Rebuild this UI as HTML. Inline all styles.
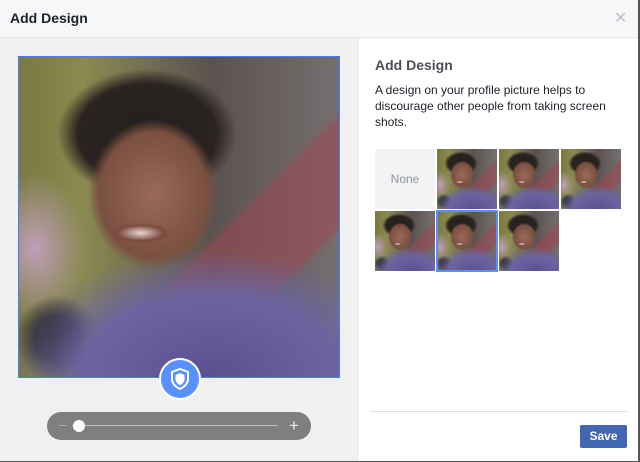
<!DOCTYPE html>
<html><head><style>
body{margin:0;width:640px;height:462px;overflow:hidden;font-family:"Liberation Sans",sans-serif;background:#fff;position:relative}
.hdr{position:absolute;left:0;top:0;width:638px;height:37px;background:#f6f7f9;border-bottom:1px solid #e5e5e5}
.hdr b{position:absolute;left:10px;top:10px;font-size:14px;color:#1d2129}
.x{position:absolute;left:614px;top:8px;font-size:16px;color:#bec3c9}
.left{position:absolute;left:0;top:38px;width:359px;height:423px;background:#f0f0f0}
.photo{background:
radial-gradient(ellipse 12% 4% at 38% 55%,#e8d8d0 0,#7a4a40 60%,transparent 80%),
radial-gradient(ellipse 26% 30% at 42% 43%,#9a6a58 0,#7a5040 65%,transparent 78%),
radial-gradient(ellipse 36% 26% at 40% 24%,#24201e 0,#2a2320 60%,transparent 78%),
radial-gradient(ellipse 80% 50% at 60% 100%,#5a5090 0,#6c64a0 50%,transparent 80%),
radial-gradient(ellipse 18% 18% at 12% 88%,#222 0,#333 40%,transparent 75%),
radial-gradient(ellipse 20% 30% at 5% 60%,#c0a0b8 0,transparent 80%),
linear-gradient(135deg,transparent 58%,rgba(160,70,80,.55) 60%,rgba(160,70,80,.55) 76%,transparent 78%),
linear-gradient(90deg,#7a7a40 0,#8a8a50 20%,#5a5250 60%,#756f6f 100%);}
.big{position:absolute;left:18px;top:56px;width:320px;height:320px;border:1px solid #4080ff}
.shield{position:absolute;left:159px;top:358px;width:38px;height:38px;border-radius:50%;background:#5890ff;border:2px solid #fff}
.slider{position:absolute;left:47px;top:412px;width:264px;height:28px;border-radius:14px;background:#7f7f7f}
.right{position:absolute;left:359px;top:38px;width:279px;height:423px;background:#fff}
h3{position:absolute;left:375px;top:57px;margin:0;font-size:14px;color:#4b4f56}
.desc{position:absolute;left:375px;top:82px;width:250px;font-size:12px;line-height:16px;color:#1d2129}
.t{position:absolute;width:60px;height:60px}
.sel{outline:2px solid #5890ff;outline-offset:-1px}
.none{background:#f2f3f5;color:#90949c;font-size:12px;text-align:center;line-height:60px}
.div{position:absolute;left:370px;top:411px;width:257px;height:1px;background:#dddfe2}
.save{position:absolute;left:580px;top:425px;width:47px;height:23px;background:#4267b2;color:#fff;font-weight:bold;font-size:12px;text-align:center;line-height:23px;border-radius:2px}
.edge{position:absolute;right:0;top:0;width:2px;height:462px;background:#555}
.edgeb{position:absolute;left:0;bottom:0;width:640px;height:1px;background:#555}
</style></head><body>
<div class="hdr"><b>Add Design</b><span class="x">✕</span></div>
<div class="left"></div>
<div class="big photo"></div>
<div class="shield"><svg width="38" height="38" viewBox="0 0 38 38"><path d="M19 9 L27 12 V19 C27 24 23 27 19 29 C15 27 11 24 11 19 V12 Z" fill="none" stroke="#fff" stroke-width="2"/><path d="M19 13 L23.5 15 V19.5 C23.5 22 21.5 24 19 25.2 C16.5 24 14.5 22 14.5 19.5 V15 Z" fill="#fff"/></svg></div>
<div class="slider"><div style="position:absolute;left:12px;top:13px;width:8px;height:1px;background:#aaa"></div><div style="position:absolute;left:25px;top:13px;width:206px;height:1px;background:#bbb"></div><div style="position:absolute;left:26px;top:8px;width:12px;height:12px;border-radius:50%;background:#fff"></div><div style="position:absolute;left:242px;top:4px;color:#eee;font-size:17px">+</div></div>
<div class="right"></div>
<h3>Add Design</h3>
<div class="desc">A design on your profile picture helps to discourage other people from taking screen shots.</div>
<div class="t none" style="left:375px;top:149px">None</div>
<div class="t photo" style="left:437px;top:149px"></div>
<div class="t photo" style="left:499px;top:149px"></div>
<div class="t photo" style="left:561px;top:149px"></div>
<div class="t photo" style="left:375px;top:211px"></div>
<div class="t photo sel" style="left:437px;top:211px"></div>
<div class="t photo" style="left:499px;top:211px"></div>
<div class="div"></div>
<div class="save">Save</div>
<div class="edge"></div><div class="edgeb"></div>
</body></html>
